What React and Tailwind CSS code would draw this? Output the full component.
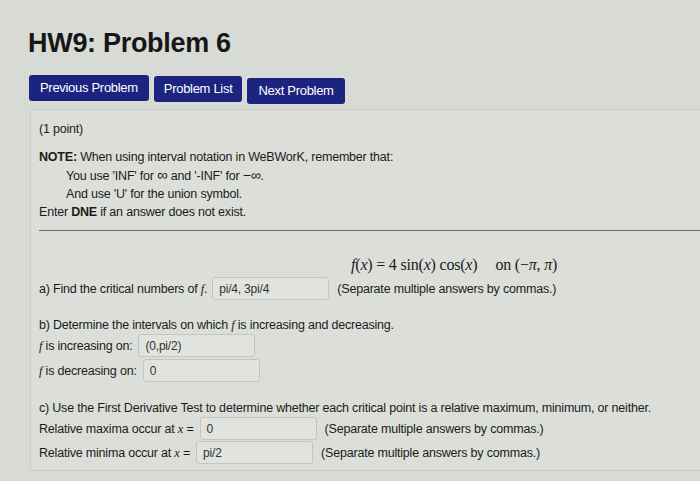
import React from 'react';

const Field = ({ value, width }) => (
  <span
    className={`inline-flex items-center h-[23px] ${width} px-[6px] border border-[#c3c6c0] rounded-[3px] bg-[#e1e4de] text-[12px] text-[#333] align-middle`}
  >
    {value}
  </span>
);

const Fx = () => <span className="italic" style={{ fontFamily: '"Liberation Serif", serif' }}>f</span>;

const App = () => {
  return (
    <div
      className="w-[700px] h-[481px] overflow-hidden bg-[#d8dad5] text-[#1b1b1b]"
      style={{ fontFamily: '"Liberation Sans", Arial, sans-serif' }}
    >
      {/* Header */}
      <h1 className="pl-[28px] pt-[27px] text-[27px] font-bold leading-[32px] tracking-[-0.3px] text-[#161616]">
        HW9: Problem 6
      </h1>

      {/* Nav buttons */}
      <div className="flex gap-[5px] pl-[29px] mt-[16px]">
        <button className="h-[26px] px-[11px] rounded-[3px] bg-[#1c2480] text-white text-[13px] tracking-[-0.3px]">
          Previous Problem
        </button>
        <button className="h-[26px] px-[10px] rounded-[3px] bg-[#1c2480] text-white text-[13px] tracking-[-0.3px] mt-[1px]">
          Problem List
        </button>
        <button className="h-[26px] px-[11px] rounded-[3px] bg-[#1c2480] text-white text-[13px] tracking-[-0.3px] mt-[3px]">
          Next Problem
        </button>
      </div>

      {/* Problem panel */}
      <div className="ml-[30px] mt-[5px] w-[700px] h-[362px] border border-[#c9cbc6] rounded-[4px] bg-[#dcdfd9] pt-[10px] text-[12.5px] leading-[18px] tracking-[-0.2px]">
        <p className="pl-[8px]">(1 point)</p>

        <div className="pl-[8px] mt-[10px]">
          <p><b>NOTE:</b> When using interval notation in WeBWorK, remember that:</p>
          <p className="pl-[27px]">
            You use 'INF' for <span className="text-[15px]">∞</span> and '-INF' for <span className="text-[14px]">−∞</span>.
          </p>
          <p className="pl-[27px]">And use 'U' for the union symbol.</p>
          <p>Enter <b>DNE</b> if an answer does not exist.</p>
        </div>

        <div className="ml-[8px] mt-[9px] border-t-[1.5px] border-[#6a6a66]" />

        {/* Function */}
        <div className="pl-[320px] mt-[25px] text-[16px]" style={{ fontFamily: '"Liberation Serif", serif' }}>
          <i>f</i>(<i>x</i>) = 4 sin(<i>x</i>) cos(<i>x</i>)<span className="ml-[18px]">on (−<i>π</i>, <i>π</i>)</span>
        </div>

        {/* a */}
        <div className="pl-[8px] mt-[3px] flex items-center">
          <span>a) Find the critical numbers of <Fx />.</span>
          <span className="ml-[5px]"><Field value="pi/4, 3pi/4" width="w-[117px]" /></span>
          <span className="ml-[8px]">(Separate multiple answers by commas.)</span>
        </div>

        {/* b */}
        <p className="pl-[8px] mt-[16px]">b) Determine the intervals on which <Fx /> is increasing and decreasing.</p>
        <div className="pl-[8px] flex items-center">
          <span><Fx /> is increasing on:</span>
          <span className="ml-[6px]"><Field value="(0,pi/2)" width="w-[117px]" /></span>
        </div>
        <div className="pl-[8px] mt-[2px] flex items-center">
          <span><Fx /> is decreasing on:</span>
          <span className="ml-[6px]"><Field value="0" width="w-[117px]" /></span>
        </div>

        {/* c */}
        <p className="pl-[8px] mt-[17px]">
          c) Use the First Derivative Test to determine whether each critical point is a relative maximum, minimum, or neither.
        </p>
        <div className="pl-[8px] flex items-center">
          <span>
            Relative maxima occur at <i style={{ fontFamily: '"Liberation Serif", serif' }}>x</i> =
          </span>
          <span className="ml-[6px]"><Field value="0" width="w-[117px]" /></span>
          <span className="ml-[8px]">(Separate multiple answers by commas.)</span>
        </div>
        <div className="pl-[8px] mt-[1px] flex items-center">
          <span>
            Relative minima occur at <i style={{ fontFamily: '"Liberation Serif", serif' }}>x</i> =
          </span>
          <span className="ml-[6px]"><Field value="pi/2" width="w-[117px]" /></span>
          <span className="ml-[8px]">(Separate multiple answers by commas.)</span>
        </div>
      </div>
    </div>
  );
};

export default App;
